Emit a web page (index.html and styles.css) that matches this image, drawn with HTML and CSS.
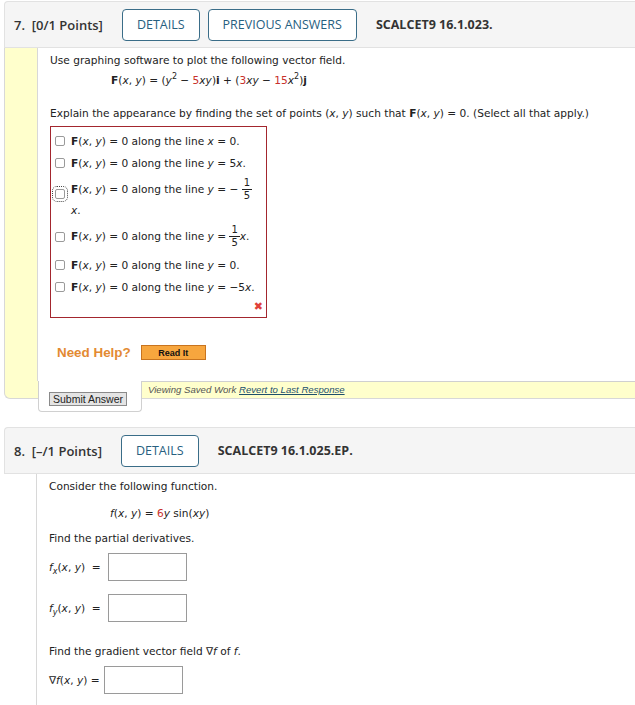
FILE: index.html
```html
<!DOCTYPE html>
<html>
<head>
<meta charset="utf-8">
<link rel="stylesheet" href="styles.css">
</head>
<body>
<div class="question">
  <div class="qhead">
    <span class="qpts">7.&nbsp; [0/1 Points]</span>
    <span class="qbtn">DETAILS</span>
    <span class="qbtn">PREVIOUS ANSWERS</span>
    <span class="qname">SCALCET9 16.1.023.</span>
  </div>
  <div class="qframe answered">
    <div class="qpanel">
      <p class="txt first">Use graphing software to plot the following vector field.</p>
      <p class="formula"><b>F</b>(<i>x</i>, <i>y</i>) = (<i>y</i><sup>2</sup> − <span class="red">5</span><i>xy</i>)<b>i</b> + (<span class="red">3</span><i>xy</i> − <span class="red">15</span><i>x</i><sup>2</sup>)<b>j</b></p>
      <p class="txt">Explain the appearance by finding the set of points (<i>x</i>, <i>y</i>) such that <b>F</b>(<i>x</i>, <i>y</i>) = 0. (Select all that apply.)</p>
      <div class="choices">
        <div class="choice"><span class="cb"></span><span class="ctext"><b>F</b>(<i>x</i>, <i>y</i>) = 0 along the line <i>x</i> = 0.</span></div>
        <div class="choice"><span class="cb"></span><span class="ctext"><b>F</b>(<i>x</i>, <i>y</i>) = 0 along the line <i>y</i> = 5<i>x</i>.</span></div>
        <div class="choice"><span class="cb focus"></span><span class="ctext"><b>F</b>(<i>x</i>, <i>y</i>) = 0 along the line <i>y</i> = − <span class="frac"><span class="num">1</span><span class="den">5</span></span><br><i>x</i>.</span></div>
        <div class="choice tall"><span class="cb mid"></span><span class="ctext"><b>F</b>(<i>x</i>, <i>y</i>) = 0 along the line <i>y</i> = <span class="frac"><span class="num">1</span><span class="den">5</span></span><i>x</i>.</span></div>
        <div class="choice"><span class="cb"></span><span class="ctext"><b>F</b>(<i>x</i>, <i>y</i>) = 0 along the line <i>y</i> = 0.</span></div>
        <div class="choice"><span class="cb"></span><span class="ctext"><b>F</b>(<i>x</i>, <i>y</i>) = 0 along the line <i>y</i> = −5<i>x</i>.</span></div>
        <div class="wrong">✖</div>
      </div>
      <div class="help">
        <span class="needhelp">Need Help?</span>
        <span class="readit">Read It</span>
      </div>
    </div>
    <div class="qfoot">
      <div class="tab"><span class="submit">Submit Answer</span></div>
      <div class="saved"><i>Viewing Saved Work</i> <a class="revert">Revert to Last Response</a></div>
    </div>
  </div>
</div>

<div class="question q8">
  <div class="qhead">
    <span class="qpts">8.&nbsp; [–/1 Points]</span>
    <span class="qbtn">DETAILS</span>
    <span class="qname">SCALCET9 16.1.025.EP.</span>
  </div>
  <div class="qframe">
    <div class="qpanel">
      <p class="txt first">Consider the following function.</p>
      <p class="formula"><i>f</i>(<i>x</i>, <i>y</i>) = <span class="red">6</span><i>y</i> sin(<i>xy</i>)</p>
      <p class="txt">Find the partial derivatives.</p>
      <div class="ansrow r1"><span class="alabel"><i>f</i><sub><i>x</i></sub>(<i>x</i>, <i>y</i>) &nbsp;=</span><span class="inp"></span></div>
      <div class="ansrow r2"><span class="alabel"><i>f</i><sub><i>y</i></sub>(<i>x</i>, <i>y</i>) &nbsp;=</span><span class="inp"></span></div>
      <p class="txt grad">Find the gradient vector field ∇<i>f</i> of <i>f</i>.</p>
      <div class="ansrow r1"><span class="alabel short">∇<i>f</i>(<i>x</i>, <i>y</i>) =</span><span class="inp"></span></div>
    </div>
  </div>
</div>
</body>
</html>
```
FILE: styles.css
```css
* { box-sizing: border-box; }
body {
  margin: 0;
  padding-top: 1px;
  background: #fff;
  font-family: "DejaVu Sans", Verdana, sans-serif;
  font-size: 10.6px;
  color: #222;
}
p { margin: 0; }
.question { margin-left: 4px; }
.qhead {
  display: flex;
  align-items: center;
  height: 47px;
  background: #f5f5f5;
  border: 1px solid #e2e2e2;
  border-right: none;
  border-radius: 4px 0 0 0;
  padding-left: 9px;
  font-family: "Open Sans", sans-serif;
  font-size: 12.5px;
  color: #333;
}
.qpts { font-weight: 600; font-size: 13px; margin-right: 19px; }
.qbtn {
  height: 32px;
  display: flex;
  align-items: center;
  padding: 0 14px;
  border: 1px solid #3a6d88;
  border-radius: 4px;
  background: #fff;
  color: #27607f;
  margin-right: 8px;
}
.qname { font-weight: 700; margin-left: 11px; color: #333; }

.qframe {
  border-left: 1px solid #d8d8d8;
  border-bottom: 1px solid #d8d8d8;
  border-radius: 0 0 0 6px;
  background: #ffffcc;
}
.qpanel {
  margin-left: 32px;
  background: #fff;
  border-left: 1px solid #d8d8d8;
  padding: 5px 12px 21px 12px;
}
.txt { line-height: 14px; }
.formula { padding-left: 61px; margin: 6px 0 19px; line-height: 14px; }
.formula sup { font-size: 8px; vertical-align: 5px; line-height: 0; }
.red { color: #c8312b; }
i { font-style: oblique; }
.choices {
  margin-top: 6px;
  width: 217px;
  border: 1px solid #a3262e;
  padding: 6px 0 4px 4px;
}
.choice { display: flex; align-items: flex-start; margin-bottom: 6px; line-height: 16px; }
.choice.tall { margin-bottom: 8px; }
.cb {
  width: 10px; height: 10px;
  border: 1px solid #9a9a9a;
  border-radius: 2px;
  background: #fff;
  margin: 3px 6px 0 0;
  flex: none;
}
.cb.focus { outline: 1px dotted #444; outline-offset: 2px; margin-top: 12px; }
.cb.mid { margin-top: 8px; }
.frac {
  display: inline-flex;
  flex-direction: column;
  align-items: center;
  vertical-align: middle;
  font-size: 10px;
  line-height: 12px;
}
.frac .num { border-bottom: 1px solid #222; padding: 0 2px; }
.wrong { text-align: right; color: #e0403a; font-size: 11px; line-height: 12px; padding-right: 3px; }
.help { display: flex; align-items: center; margin: 27px 0 0 7px; }
.needhelp { font-family: "Liberation Sans", Arial, sans-serif; font-weight: 700; font-size: 13.4px; color: #e38a32; margin-right: 10px; }
.readit {
  font-family: "Liberation Sans", Arial, sans-serif;
  font-weight: 700; font-size: 9px; color: #111;
  width: 65px; height: 15px;
  display: flex; align-items: center; justify-content: center;
  background: #f7a63e;
  border: 1px solid #c8741f;
}
.qfoot { display: flex; margin-left: 33px; margin-bottom: -14px; }
.tab {
  width: 104px; height: 31px;
  background: #fff;
  border: 1px solid #d0d0d0;
  border-top: none;
  border-radius: 0 0 4px 4px;
  padding: 11px 0 0 10px;
}
.submit {
  display: inline-block;
  font-family: "Liberation Sans", Arial, sans-serif;
  font-size: 10.5px; color: #222;
  background: #e4e4e4;
  border: 1px solid #8a8a8a;
  padding: 0 3px;
  line-height: 12px;
}
.saved {
  flex: 1;
  height: 17px;
  background: #ffffcc;
  border-top: 1px solid #d0d0d0;
  font-family: "Liberation Sans", Arial, sans-serif;
  font-size: 9.6px;
  color: #555;
  padding: 2px 0 0 6px;
}
.revert { color: #1d4f6c; text-decoration: underline; font-style: italic; }

.q8 { margin-top: 28px; }
.q8 .qframe { background: #fff; border: none; }
.q8 .qpanel { padding-top: 5px; min-height: 240px; }
.q8 .formula { margin: 13px 0 11px; }
.ansrow { display: flex; align-items: center; }
.ansrow.r1 { margin-top: 8px; }
.ansrow.r2 { margin-top: 13px; }
.alabel { width: 59px; }
.alabel.short { width: 55px; }
sub { font-size: 8px; vertical-align: -3px; line-height: 0; }
.inp { width: 79px; height: 28px; border: 1px solid #9a9a9a; background: #fff; }
.grad { margin-top: 22px; }
```
